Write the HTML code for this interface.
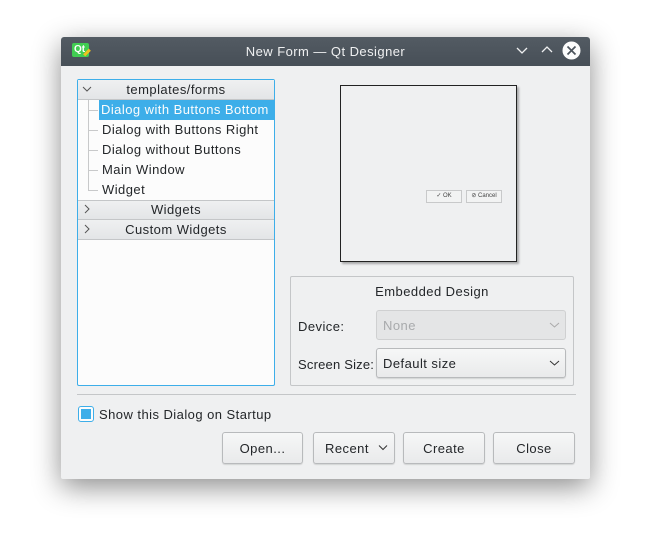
<!DOCTYPE html>
<html><head><meta charset="utf-8"><style>
*{box-sizing:border-box;margin:0;padding:0}
body{width:651px;height:540px;background:#fff;position:relative;overflow:hidden;font-family:"Liberation Sans",sans-serif;font-size:13px;letter-spacing:0.45px;color:#232629}
.a{position:absolute}
#win{left:61px;top:37px;width:529px;height:442px;background:#eff0f1;border-radius:3px 3px 2px 2px;box-shadow:0 8px 28px rgba(0,0,0,.45)}
#tb{left:0;top:0;width:529px;height:29px;background:linear-gradient(#535b63,#474f57);border-radius:3px 3px 0 0;color:#eff0f1;font-size:13px}
.btn{background:linear-gradient(#f6f7f7,#e9eaeb);border:1px solid #b8babc;border-radius:3px;box-shadow:0 1px 1px rgba(0,0,0,.12);text-align:center;line-height:31px}
.row{position:absolute;left:1px;width:195px;height:20px;line-height:20px}
.hdr{background:linear-gradient(#eff0f1,#e3e5e7);border-bottom:1px solid #c4c6c8;text-align:center}
.it{padding-left:23px}
</style></head><body>
<div id="win" class="a">
 <div id="tb" class="a">
  <div class="a" style="left:11px;top:6px;width:17px;height:14px;background:#41cd52;border-radius:2px;color:#fff;font-size:10px;font-weight:bold;line-height:14px;padding-left:2px;letter-spacing:0">Qt</div>
  <div class="a" style="left:22px;top:14px;width:8px;height:3px;background:#f0c020;transform:rotate(-45deg)"></div>
  <div class="a" style="left:0;width:529px;top:7px;text-align:center">New Form — Qt Designer</div>
  <svg class="a" style="left:455px;top:9px" width="12" height="10"><path d="M1 2l5 5 5-5" stroke="#eff0f1" stroke-width="1.3" fill="none"/></svg>
  <svg class="a" style="left:480px;top:8px" width="12" height="10"><path d="M1 7l5-5 5 5" stroke="#eff0f1" stroke-width="1.3" fill="none"/></svg>
  <svg class="a" style="left:501px;top:4px" width="19" height="19"><circle cx="9.5" cy="9.5" r="9" fill="#fcfcfc"/><path d="M5.5 5.5l8 8M13.5 5.5l-8 8" stroke="#4b535b" stroke-width="1.7"/></svg>
 </div>
 <div class="a" style="left:16px;top:42px;width:198px;height:307px;background:#fcfcfc;border:1px solid #3daee9;border-radius:2px">
  <div class="row hdr" style="top:0;left:0;width:196px">templates/forms</div>
  <svg class="a" style="left:4px;top:5px" width="10" height="8"><path d="M1 2l4 4 4-4" stroke="#555" fill="none"/></svg>
  <div class="a" style="left:10px;top:20px;width:1px;height:90px;background:#c8c9ca"></div>
  <div class="a" style="left:10px;top:30px;width:10px;height:1px;background:#c8c9ca"></div>
  <div class="a" style="left:10px;top:50px;width:10px;height:1px;background:#c8c9ca"></div>
  <div class="a" style="left:10px;top:70px;width:10px;height:1px;background:#c8c9ca"></div>
  <div class="a" style="left:10px;top:90px;width:10px;height:1px;background:#c8c9ca"></div>
  <div class="a" style="left:10px;top:110px;width:10px;height:1px;background:#c8c9ca"></div>
  <div class="row" style="top:20px;left:21px;width:175px;background:#3daee9;color:#fcfcfc;padding-left:2px">Dialog with Buttons Bottom</div>
  <div class="row it" style="top:40px">Dialog with Buttons Right</div>
  <div class="row it" style="top:60px">Dialog without Buttons</div>
  <div class="row it" style="top:80px">Main Window</div>
  <div class="row it" style="top:100px">Widget</div>
  <div class="row hdr" style="top:120px;left:0;width:196px;border-top:1px solid #c4c6c8;line-height:18px">Widgets</div>
  <div class="row hdr" style="top:140px;left:0;width:196px">Custom Widgets</div>
  <svg class="a" style="left:5px;top:124px" width="8" height="10"><path d="M2 1l4 4-4 4" stroke="#555" fill="none"/></svg>
  <svg class="a" style="left:5px;top:144px" width="8" height="10"><path d="M2 1l4 4-4 4" stroke="#555" fill="none"/></svg>
 </div>
 <div class="a" style="left:279px;top:48px;width:177px;height:177px;border:1px solid #222;background:#eff0f1;box-shadow:2px 2px 2px rgba(0,0,0,.3);letter-spacing:0">
  <div class="a" style="left:85px;top:104px;width:36px;height:13px;border:1px solid #c8c9ca;background:#f2f3f3;font-size:6px;line-height:11px;text-align:center;color:#444">✓ OK</div>
  <div class="a" style="left:125px;top:104px;width:36px;height:13px;border:1px solid #c8c9ca;background:#f2f3f3;font-size:6px;line-height:11px;text-align:center;color:#444">⊘ Cancel</div>
 </div>
 <div class="a" style="left:229px;top:239px;width:284px;height:110px;border:1px solid #c4c6c8;border-radius:2px">
  <div class="a" style="left:0;width:282px;top:7px;text-align:center">Embedded Design</div>
  <div class="a" style="left:7px;top:42px">Device:</div>
  <div class="a" style="left:7px;top:80px;letter-spacing:0.2px">Screen Size:</div>
  <div class="a btn" style="left:85px;top:33px;width:190px;height:30px;background:#e4e5e6;color:#a8aaac;text-align:left;padding-left:6px;box-shadow:none;border-color:#cfd0d1;line-height:30px">None</div>
  <svg class="a" style="left:258px;top:44px" width="11" height="8"><path d="M1 2l4.5 4 4.5-4" stroke="#aaa" fill="none"/></svg>
  <div class="a btn" style="left:85px;top:71px;width:190px;height:30px;text-align:left;padding-left:6px;line-height:30px">Default size</div>
  <svg class="a" style="left:258px;top:82px" width="11" height="8"><path d="M1 2l4.5 4 4.5-4" stroke="#333" fill="none"/></svg>
 </div>
 <div class="a" style="left:16px;top:357px;width:499px;height:1px;background:#c4c6c8"></div>
 <div class="a" style="left:17px;top:369px;width:16px;height:16px;border:1px solid #3daee9;border-radius:3px;background:#fcfcfc"><div class="a" style="left:2px;top:2px;width:10px;height:10px;background:#3daee9"></div></div>
 <div class="a" style="left:38px;top:370px">Show this Dialog on Startup</div>
 <div class="a btn" style="left:161px;top:395px;width:81px;height:32px">Open...</div>
 <div class="a btn" style="left:252px;top:395px;width:82px;height:32px;text-align:left;padding-left:11px">Recent</div>
 <svg class="a" style="left:317px;top:407px" width="10" height="7"><path d="M1 1.5l4 4 4-4" stroke="#333" fill="none"/></svg>
 <div class="a btn" style="left:342px;top:395px;width:82px;height:32px">Create</div>
 <div class="a btn" style="left:432px;top:395px;width:82px;height:32px">Close</div>
</div>
</body></html>
